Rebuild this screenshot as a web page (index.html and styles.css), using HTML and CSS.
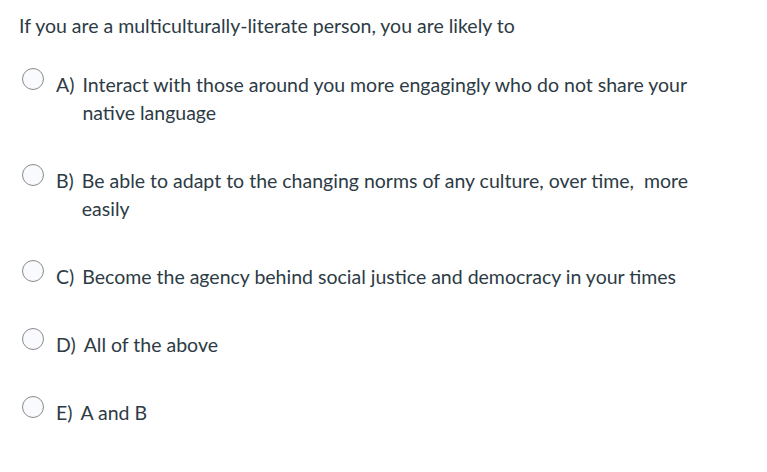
FILE: index.html
```html
<!DOCTYPE html>
<html>
<head>
<meta charset="utf-8">
<link rel="stylesheet" href="styles.css">
</head>
<body>
<div class="quiz">
  <p class="question">If you are a multiculturally-literate person, you are likely to</p>
  <div class="answers">
    <label class="answer">
      <span class="radio"></span>
      <span class="letter">A)</span>
      <span class="text">Interact with those around you more engagingly who do not share your native language</span>
    </label>
    <label class="answer">
      <span class="radio"></span>
      <span class="letter">B)</span>
      <span class="text">Be able to adapt to the changing norms of any culture, over time,&nbsp; more easily</span>
    </label>
    <label class="answer">
      <span class="radio"></span>
      <span class="letter">C)</span>
      <span class="text">Become the agency behind social justice and democracy in your times</span>
    </label>
    <label class="answer">
      <span class="radio"></span>
      <span class="letter">D)</span>
      <span class="text">All of the above</span>
    </label>
    <label class="answer">
      <span class="radio"></span>
      <span class="letter">E)</span>
      <span class="text">A and B</span>
    </label>
  </div>
</div>
</body>
</html>
```
FILE: styles.css
```css
html, body {
  margin: 0;
  padding: 0;
  background: #ffffff;
}
body {
  font-family: Lato, "Open Sans", sans-serif;
  font-size: 19.5px;
  color: #2d3b45;
}
.quiz {
  padding: 12px 0 0 19px;
  width: 700px;
}
.question {
  margin: 0;
  line-height: 28px;
}
.answers {
  display: flex;
  flex-direction: column;
  gap: 40px;
  margin-top: 31px;
  padding-left: 3px;
}
.answer {
  display: flex;
  align-items: flex-start;
  line-height: 28px;
}
.radio {
  flex: none;
  width: 20px;
  height: 20px;
  border: 1px solid #8b8b8b;
  border-radius: 50%;
  background: #f9fafe;
  margin-top: -3px;
  margin-right: 12px;
}
.letter {
  flex: none;
  margin-right: 8px;
}
.text {
  width: 615px;
}
```
